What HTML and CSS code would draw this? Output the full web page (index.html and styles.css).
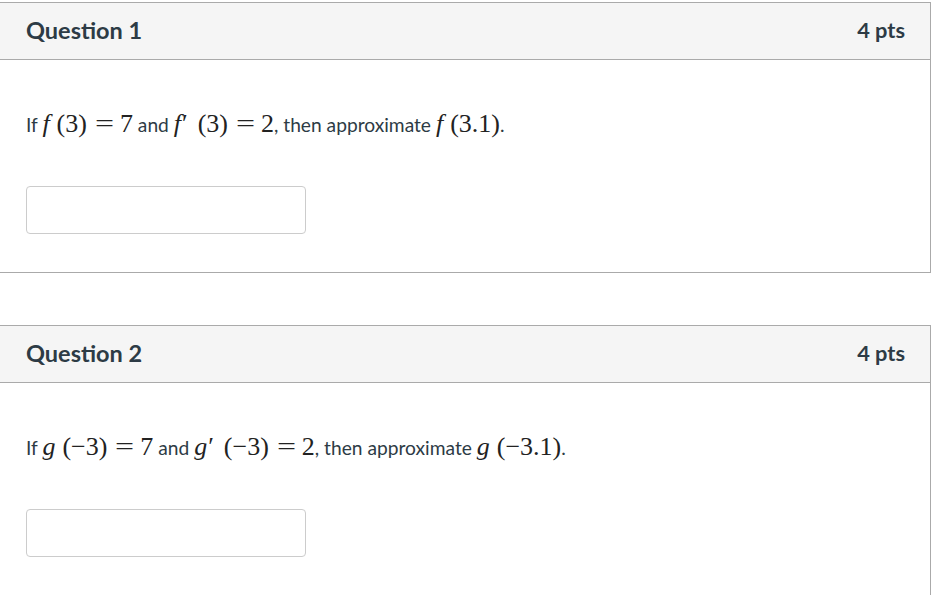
FILE: index.html
```html
<!DOCTYPE html>
<html>
<head>
<meta charset="utf-8">
<link rel="stylesheet" href="styles.css">
</head>
<body>
<div class="page">
  <section class="card">
    <header class="card-head">
      <span class="q-title">Question 1</span>
      <span class="q-pts">4 pts</span>
    </header>
    <div class="card-body">
      <p class="q-text">If <span class="m"><i class="v">f</i>(3)<span class="eq">=</span>7</span> and <span class="m"><i class="v vp">f</i><span class="pr">&#8242;</span>(3)<span class="eq">=</span>2</span>, then approximate <span class="m"><i class="v">f</i>(3.1)</span>.</p>
      <input class="answer" type="text">
    </div>
  </section>
  <section class="card">
    <header class="card-head">
      <span class="q-title">Question 2</span>
      <span class="q-pts">4 pts</span>
    </header>
    <div class="card-body">
      <p class="q-text">If <span class="m"><i class="v">g</i>(&minus;3)<span class="eq">=</span>7</span> and <span class="m"><i class="v vp">g</i><span class="pr">&#8242;</span>(&minus;3)<span class="eq">=</span>2</span>, then approximate <span class="m"><i class="v">g</i>(&minus;3.1)</span>.</p>
      <input class="answer" type="text">
    </div>
  </section>
</div>
</body>
</html>
```

FILE: styles.css
```css
html, body {
  margin: 0;
  padding: 0;
  background: #fff;
}
body {
  font-family: Lato, "Liberation Sans", sans-serif;
  color: #2d3b45;
}
.page {
  padding-top: 2px;
  display: flex;
  flex-direction: column;
  gap: 52px;
  margin-left: -1px;
  width: 932px;
}
.card {
  border: 1px solid #aaaaaa;
  background: #fff;
}
.card-head {
  height: 57px;
  background: #f5f5f5;
  border-bottom: 1px solid #aaaaaa;
  display: flex;
  align-items: center;
  justify-content: space-between;
  padding: 0 25px 3px 26px;
  box-sizing: border-box;
}
.q-title {
  font-size: 23.5px;
  font-weight: bold;
  color: #2d3b45;
}
.q-pts {
  font-size: 21.8px;
  font-weight: bold;
  color: #2d3b45;
}
.card-body {
  padding: 53px 26px 38px;
}
.q-text {
  margin: 0;
  font-size: 19.2px;
  line-height: 24px;
  height: 24px;
  color: #2d3b45;
}
.m {
  font-family: "Liberation Serif", "DejaVu Serif", serif;
  font-size: 26px;
  line-height: 10px;
  color: #222;
}
.v {
  font-style: italic;
  margin-right: 7px;
}
.vp {
  margin-right: 1px;
}
.pr {
  margin-right: 10px;
  font-style: normal;
}
.eq {
  display: inline-block;
  width: 19px;
  margin: 0 6px 0 8px;
  text-align: center;
  transform: scaleX(1.3);
}
.answer {
  display: block;
  margin-top: 49px;
  width: 280px;
  height: 48px;
  box-sizing: border-box;
  border: 1px solid #cccccc;
  border-radius: 4px;
  background: #fff;
  padding: 0 8px;
  font: inherit;
  outline: none;
}
```
